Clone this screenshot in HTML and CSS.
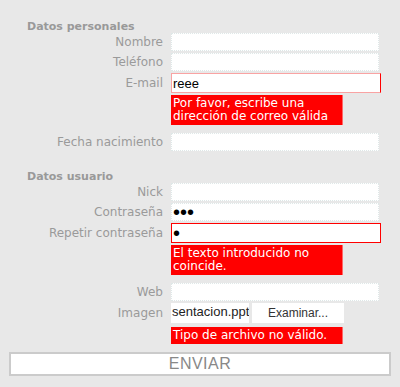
FILE: index.html
```html
<!DOCTYPE html>
<html>
<head>
<meta charset="utf-8" />
<title>Registro</title>
<link rel="stylesheet" href="styles.css">
</head>

<body>
<!-- Formulario de registro -->
<form class="registro" onsubmit="return false;">
    <h2 class="seccion">Datos personales</h2>
    <div class="fila">
        <label for="nombre">Nombre</label>
        <input id="nombre" class="campo" type="text" />
    </div>
    <div class="fila">
        <label for="telefono">Teléfono</label>
        <input id="telefono" class="campo" type="text" />
    </div>
    <div class="fila">
        <label for="email">E-mail</label>
        <input id="email" class="campo invalido email" type="text" value="reee" />
    </div>
    <div class="fila fila_error">
        <div class="error">Por favor, escribe una dirección de correo válida</div>
    </div>
    <div class="fila">
        <label for="fecha">Fecha nacimiento</label>
        <input id="fecha" class="campo" type="text" />
    </div>

    <h2 class="seccion">Datos usuario</h2>
    <div class="fila">
        <label for="nick">Nick</label>
        <input id="nick" class="campo" type="text" />
    </div>
    <div class="fila">
        <label for="pass">Contraseña</label>
        <input id="pass" class="campo clave" type="password" value="abc" />
    </div>
    <div class="fila">
        <label for="pass2">Repetir contraseña</label>
        <input id="pass2" class="campo clave invalido" type="password" value="a" />
    </div>
    <div class="fila fila_error">
        <div class="error">El texto introducido no coincide.</div>
    </div>
    <div class="fila">
        <label for="web">Web</label>
        <input id="web" class="campo" type="text" />
    </div>
    <div class="fila fila_archivo">
        <label for="imagen">Imagen</label>
        <div class="archivo">
            <span class="archivo_nombre">sentacion.ppt</span>
            <button type="button" class="examinar">Examinar...</button>
        </div>
    </div>
    <div class="fila fila_error">
        <div class="error">Tipo de archivo no válido.</div>
    </div>

    <button type="submit" class="enviar">ENVIAR</button>
</form>
</body>

</html>
```

FILE: styles.css
```css
body {
    margin: 0;
    padding: 0;
    background: #e8e8e8;
    font-family: "DejaVu Sans", Verdana, sans-serif;
    font-size: 12px;
    color: #999;
}

.registro {
    padding-top: 20px;
}

.seccion {
    margin: 0 0 0 27px;
    font-size: 11px;
    line-height: 13px;
    font-weight: bold;
    color: #999;
}

.seccion + .fila {
    margin-top: 0;
}

.fila ~ .seccion {
    margin-top: 19px;
}

.fila {
    display: flex;
    align-items: center;
    margin-bottom: 2px;
}

.fila label {
    width: 163px;
    margin-right: 8px;
    text-align: right;
    color: #9a9a9a;
}

.fila_error {
    padding-left: 171px;
    margin-bottom: 8px;
}

.fila_archivo {
    margin-bottom: 4px;
}

.campo {
    box-sizing: border-box;
    -moz-box-sizing: border-box;
    -webkit-box-sizing: border-box;
    width: 208px;
    height: 18px;
    margin: 0;
    padding: 0 1px;
    border: 1px dotted #dfe8e8;
    background: white;
    font-family: "Liberation Sans", Arial, sans-serif;
    font-size: 13px;
    color: black;
    outline: none;
}

.clave {
    font-size: 20px;
    letter-spacing: 0;
}

.invalido {
    width: 210px;
    height: 20px;
    border: 1px solid #f00;
}

.email {
    border-color: #f9a3a3 #f00 #f9a3a3 #f9a3a3;
}

.error {
    box-sizing: border-box;
    width: 172px;
    padding: 2px;
    background: #f00;
    border-right: 1px solid #f66;
    color: white;
    font-size: 12px;
    line-height: 13px;
}

.archivo {
    display: flex;
    height: 20px;
    font-family: "Liberation Sans", Arial, sans-serif;
}

.archivo_nombre {
    width: 77px;
    padding-left: 1px;
    overflow: hidden;
    white-space: nowrap;
    background: white;
    color: #222;
    font-size: 13px;
    line-height: 17px;
}

.examinar {
    width: 92px;
    height: 20px;
    margin-left: 3px;
    padding: 0;
    border: none;
    background: white;
    font-family: "Liberation Sans", Arial, sans-serif;
    font-size: 12px;
    color: #333;
}

.enviar {
    display: block;
    box-sizing: border-box;
    width: 382px;
    height: 24px;
    margin: 1px 0 0 9px;
    padding: 0;
    border: 2px solid #cbcbcb;
    background: white;
    font-family: "Liberation Sans", Arial, sans-serif;
    font-size: 16px;
    letter-spacing: 0.5px;
    color: #888;
    cursor: pointer;
}
```
